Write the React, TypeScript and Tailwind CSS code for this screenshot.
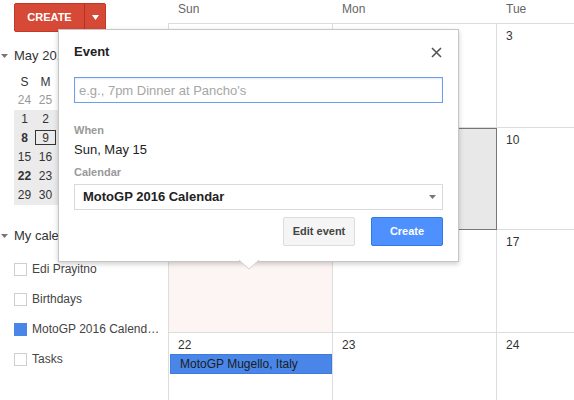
import { useState } from 'react';

const miniWeeks = [
    [24, 25, 26, 27, 28, 29, 30],
    [1, 2, 3, 4, 5, 6, 7],
    [8, 9, 10, 11, 12, 13, 14],
    [15, 16, 17, 18, 19, 20, 21],
    [22, 23, 24, 25, 26, 27, 28],
    [29, 30, 31, 1, 2, 3, 4],
];

// only the three visible days of each week; the rest is off-screen
const monthWeeks = [
    [1, 2, 3],
    [8, 9, 10],
    [15, 16, 17],
    [22, 23, 24],
];

const dayNames = ['Sun', 'Mon', 'Tue'];
const boldDays = [8, 22];

const calendars = [
    { name: 'Edi Prayitno', on: false },
    { name: 'Birthdays', on: false },
    { name: 'MotoGP 2016 Calend…', on: true },
    { name: 'Tasks', on: false },
];

function DownCaret({ className }: { className?: string }) {
    return (
        <svg className={className} viewBox="0 0 7 4" aria-hidden>
            <polygon points="0,0 7,0 3.5,4" fill="currentColor" />
        </svg>
    );
}

function MiniCalendar() {
    return (
        <div className="ml-[14px] mt-[7px] text-[12px] text-[#333]">
            <div className="grid h-[19px] grid-cols-[repeat(7,21px)] items-center text-center">
                {['S', 'M', 'T', 'W', 'T', 'F', 'S'].map((d, i) => (
                    <span key={i}>{d}</span>
                ))}
            </div>
            {miniWeeks.map((week, w) => (
                <div
                    key={w}
                    className={`grid h-[19px] grid-cols-[repeat(7,21px)] text-center ${w > 0 ? 'bg-[#ebebeb]' : ''}`}
                >
                    {week.map((d, i) => {
                        const other = w === 0 || (w === 5 && i > 1);
                        const today = w === 2 && d === 9;
                        return (
                            <div key={i} className="flex h-[19px] items-start justify-center">
                                <span
                                    className={`mt-[1px] flex h-[15px] w-[21px] items-center justify-center ${other ? 'text-[#999]' : ''} ${!other && boldDays.includes(d) ? 'font-bold' : ''} ${today ? 'border border-[#333]' : ''}`}
                                >
                                    {d}
                                </span>
                            </div>
                        );
                    })}
                </div>
            ))}
        </div>
    );
}

function Sidebar() {
    return (
        <aside className="w-[168px] shrink-0">
            <button className="ml-[14px] mt-[3px] flex h-[29px] w-[92px] rounded-[2px] border border-[#c53727] bg-[#d64937] text-white">
                <span className="flex h-full w-[70px] items-center justify-center border-r border-[#b8301f] text-[11px] font-bold leading-none">
                    CREATE
                </span>
                <span className="flex h-full flex-1 items-center justify-center">
                    <svg className="h-[5px] w-[7px]" viewBox="0 0 7 5" aria-hidden>
                        <polygon points="0,0 7,0 3.5,5" fill="white" />
                    </svg>
                </span>
            </button>

            <div className="mt-[15px] flex h-[18px] items-center text-[13px] text-[#333]">
                <DownCaret className="ml-[1px] h-[4px] w-[7px] text-[#777]" />
                <span className="ml-[6px] whitespace-nowrap">May 2016</span>
            </div>

            <MiniCalendar />

            <div className="mt-[22px] flex h-[18px] items-center text-[13px] text-[#333]">
                <DownCaret className="ml-[1px] h-[4px] w-[7px] text-[#777]" />
                <span className="ml-[6px] whitespace-nowrap">My calendars</span>
            </div>

            <ul className="mt-[9px]">
                {calendars.map((c) => (
                    <li key={c.name} className="flex h-[30px] items-center gap-[5px] pl-[14px]">
                        <span
                            className={`h-[13px] w-[13px] shrink-0 border ${c.on ? 'border-[#4986e7] bg-[#4986e7]' : 'border-[#cfcfcf] bg-white'}`}
                        />
                        <span className="whitespace-nowrap text-[12px] text-[#444]">{c.name}</span>
                    </li>
                ))}
            </ul>
        </aside>
    );
}

function MonthGrid() {
    return (
        <main className="flex-1 overflow-hidden">
            <div className="grid h-[23px] grid-cols-[164px_164px_164px]">
                {dayNames.map((d) => (
                    <div key={d} className="pl-[10px] pt-[2px] text-[12px] leading-[15px] text-[#666]">
                        {d}
                    </div>
                ))}
            </div>
            <div className="grid w-max grid-cols-[164px_164px_164px] grid-rows-[104px_102px_103px_103px] border-l border-t border-[#ddd]">
                {monthWeeks.map((week, w) =>
                    week.map((d, i) => {
                        const selected = w === 1 && i === 1;
                        const range = w === 2 && i === 0;
                        return (
                            <div
                                key={d}
                                className={`border-b border-r border-[#ddd] pt-[4px] text-[12px] leading-[16px] text-[#333] ${selected ? 'bg-[#e8e8e8] outline outline-[#777] -outline-offset-1' : ''} ${range ? 'bg-[#fdf4f4]' : ''}`}
                            >
                                <div className="pl-[9px]">{d}</div>
                                {w === 3 && i === 0 && (
                                    <div className="ml-px mt-px flex h-[20px] items-center border border-[#3f7bdc] bg-[#4986e7] pl-[9px] text-[12px] text-[#1d1d1d]">
                                        MotoGP Mugello, Italy
                                    </div>
                                )}
                            </div>
                        );
                    }),
                )}
            </div>
        </main>
    );
}

function QuickEvent() {
    const [title, setTitle] = useState('');
    return (
        <div className="absolute left-[58px] top-[29px] h-[233px] w-[401px] border border-[#c6c6c6] bg-white px-[15px] shadow-[0_2px_5px_rgba(0,0,0,0.2)]">
            <div className="flex items-center justify-between pt-[12px]">
                <h2 className="text-[13px] font-bold leading-[20px] text-[#222]">Event</h2>
                <svg className="mr-px h-[11px] w-[11px]" viewBox="0 0 11 11" aria-hidden>
                    <path d="M1 1 L10 10 M10 1 L1 10" stroke="#555" strokeWidth="1.6" />
                </svg>
            </div>

            <input
                value={title}
                onChange={(e) => setTitle(e.target.value)}
                placeholder="e.g., 7pm Dinner at Pancho's"
                className="mt-[15px] block h-[26px] w-full border border-[#6d9eeb] px-[4px] text-[13px] text-[#222] shadow-[inset_0_1px_2px_rgba(0,0,0,0.1)] outline-none placeholder:text-[#a6a6a6]"
            />

            <div className="mt-[20px] text-[11px] font-bold leading-[14px] text-[#999]">When</div>
            <div className="mt-[4px] text-[13px] leading-[18px] text-[#222]">Sun, May 15</div>

            <div className="mt-[6px] text-[11px] font-bold leading-[14px] text-[#999]">Calendar</div>
            <div className="mt-[5px] flex h-[26px] items-center justify-between border border-[#d9d9d9] pl-[8px] pr-[6px]">
                <span className="text-[13px] font-bold text-[#222]">MotoGP 2016 Calendar</span>
                <DownCaret className="h-[4px] w-[7px] text-[#777]" />
            </div>

            <div className="mt-[7px] flex justify-end gap-[16px]">
                <button className="h-[29px] w-[72px] rounded-[2px] border border-[#dcdcdc] bg-[#f5f5f5] text-[11px] font-bold text-[#444]">
                    Edit event
                </button>
                <button className="h-[29px] w-[72px] rounded-[2px] border border-[#3079ed] bg-[#4d90fe] text-[11px] font-bold text-white">
                    Create
                </button>
            </div>

            <svg
                className="absolute left-[180px] top-full -mt-px h-[10px] w-[20px] overflow-visible"
                viewBox="0 0 20 10"
                aria-hidden
            >
                <polygon points="0,0 10,9 20,0" fill="white" />
                <path d="M0 0 L10 9 L20 0" fill="none" stroke="#d0d0d0" strokeWidth="1" />
            </svg>
        </div>
    );
}

export default function App() {
    return (
        <div className="relative flex h-[400px] w-[574px] overflow-hidden bg-white font-['Liberation_Sans',Arial,sans-serif]">
            <Sidebar />
            <MonthGrid />
            <QuickEvent />
        </div>
    );
}
